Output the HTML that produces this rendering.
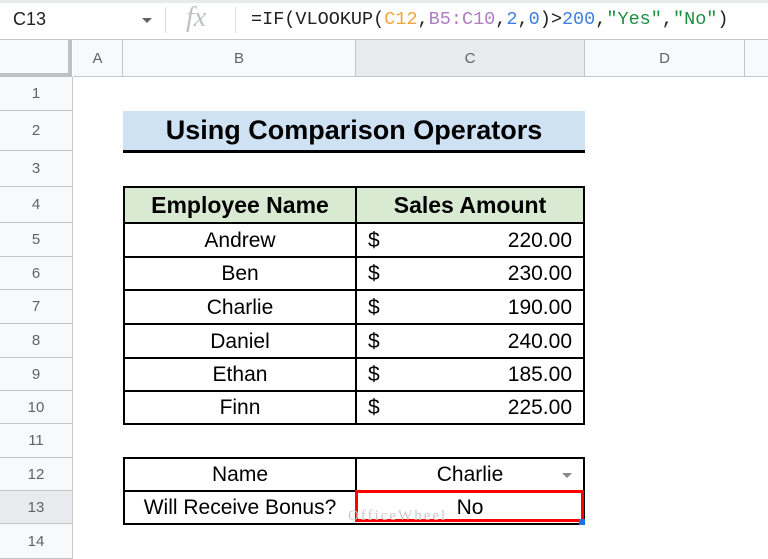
<!DOCTYPE html>
<html><head><style>
*{margin:0;padding:0;box-sizing:border-box}
body{width:768px;height:559px;overflow:hidden;background:#fff;font-family:"Liberation Sans",Arial,sans-serif;position:relative}
.a{position:absolute}
.rh{position:absolute;left:0;width:72px;border-bottom:1px solid #c4c7c5;background:#f8f9fa;color:#5f6368;font-size:15px;text-align:center;display:flex;align-items:center;justify-content:center}
.ch{position:absolute;top:40px;height:37px;border-right:1px solid #c4c7c5;background:#f8f9fa;color:#5f6368;font-size:15px;display:flex;align-items:center;justify-content:center}
.c{position:absolute;display:flex;align-items:center;justify-content:center;font-size:21px;color:#000}
</style></head><body>
<div class="a" style="left:0;top:0;width:768px;height:3px;background:#e8eaed"></div>
<div class="a" style="left:0;top:39px;width:768px;height:1px;background:#c4c7c5"></div>
<div class="a" style="left:13px;top:9px;font-size:18px;color:#202124">C13</div>
<div class="a" style="left:142px;top:18px;width:0;height:0;border-left:5px solid transparent;border-right:5px solid transparent;border-top:5px solid #5f6368"></div>
<div class="a" style="left:165px;top:7px;width:1px;height:26px;background:#dadce0"></div>
<div class="a" style="left:186px;top:2px;font-family:'Liberation Serif',serif;font-style:italic;font-size:28px;color:#bdc1c6">fx</div>
<div class="a" style="left:235px;top:7px;width:1px;height:26px;background:#dadce0"></div>
<div class="a" style="left:251px;top:9px;font-family:'Liberation Mono',monospace;font-size:18.5px;color:#202124;white-space:pre">=IF(VLOOKUP(<span style="color:#f4a53c">C12</span>,<span style="color:#b07cc6">B5:C10</span>,<span style="color:#3d7fe0">2</span>,<span style="color:#3d7fe0">0</span>)&gt;<span style="color:#3d7fe0">200</span>,<span style="color:#1e8e3e">"Yes"</span>,<span style="color:#1e8e3e">"No"</span>)</div>
<div class="a" style="left:0;top:40px;width:72px;height:37px;background:#f8f9fa;border-right:4px solid #bdc1c6;border-bottom:4px solid #bdc1c6"></div>
<div class="ch" style="left:73px;width:50px">A</div>
<div class="ch" style="left:123px;width:233px">B</div>
<div class="ch" style="left:356px;width:229px;background:#e8eaed">C</div>
<div class="ch" style="left:585px;width:160px">D</div>
<div class="ch" style="left:745px;width:23px;border-right:none"></div>
<div class="a" style="left:73px;top:76px;width:695px;height:1px;background:#c4c7c5"></div>
<div class="a" style="left:72px;top:77px;width:1px;height:482px;background:#c4c7c5"></div>
<div class="rh" style="top:77px;height:34px">1</div>
<div class="rh" style="top:111px;height:40px">2</div>
<div class="rh" style="top:151px;height:36px">3</div>
<div class="rh" style="top:187px;height:36px">4</div>
<div class="rh" style="top:223px;height:34px">5</div>
<div class="rh" style="top:257px;height:33px">6</div>
<div class="rh" style="top:290px;height:34px">7</div>
<div class="rh" style="top:324px;height:34px">8</div>
<div class="rh" style="top:358px;height:33px">9</div>
<div class="rh" style="top:391px;height:33px">10</div>
<div class="rh" style="top:424px;height:34px">11</div>
<div class="rh" style="top:458px;height:33px">12</div>
<div class="rh" style="top:491px;height:33px;background:#e8eaed">13</div>
<div class="rh" style="top:524px;height:35px">14</div>
<div class="c" style="left:123px;top:111px;width:462px;height:42px;background:#cfe2f3;border-bottom:3px solid #000;font-weight:bold;font-size:27px">Using Comparison Operators</div>
<div class="a" style="left:123px;top:186px;width:462px;height:239px;border:2px solid #000"></div>
<div class="a" style="left:125px;top:188px;width:458px;height:35px;background:#d9ead3"></div>
<div class="a" style="left:355px;top:186px;width:2px;height:239px;background:#000"></div>
<div class="a" style="left:123px;top:222px;width:462px;height:2px;background:#000"></div>
<div class="a" style="left:123px;top:256px;width:462px;height:2px;background:#000"></div>
<div class="a" style="left:123px;top:289px;width:462px;height:2px;background:#000"></div>
<div class="a" style="left:123px;top:323px;width:462px;height:2px;background:#000"></div>
<div class="a" style="left:123px;top:357px;width:462px;height:2px;background:#000"></div>
<div class="a" style="left:123px;top:390px;width:462px;height:2px;background:#000"></div>
<div class="c" style="left:125px;top:188px;width:230px;height:35px;font-weight:bold;font-size:23px">Employee Name</div>
<div class="c" style="left:357px;top:188px;width:226px;height:35px;font-weight:bold;font-size:23px">Sales Amount</div>
<div class="c" style="left:125px;top:224px;width:230px;height:33px">Andrew</div>
<div class="c" style="left:125px;top:258px;width:230px;height:32px">Ben</div>
<div class="c" style="left:125px;top:291px;width:230px;height:33px">Charlie</div>
<div class="c" style="left:125px;top:325px;width:230px;height:33px">Daniel</div>
<div class="c" style="left:125px;top:359px;width:230px;height:32px">Ethan</div>
<div class="c" style="left:125px;top:392px;width:230px;height:32px">Finn</div>
<div class="c" style="left:368px;top:224px;height:33px">$</div><div class="c" style="left:470px;top:224px;width:102px;height:33px;justify-content:flex-end">220.00</div>
<div class="c" style="left:368px;top:258px;height:32px">$</div><div class="c" style="left:470px;top:258px;width:102px;height:32px;justify-content:flex-end">230.00</div>
<div class="c" style="left:368px;top:291px;height:33px">$</div><div class="c" style="left:470px;top:291px;width:102px;height:33px;justify-content:flex-end">190.00</div>
<div class="c" style="left:368px;top:325px;height:33px">$</div><div class="c" style="left:470px;top:325px;width:102px;height:33px;justify-content:flex-end">240.00</div>
<div class="c" style="left:368px;top:359px;height:32px">$</div><div class="c" style="left:470px;top:359px;width:102px;height:32px;justify-content:flex-end">185.00</div>
<div class="c" style="left:368px;top:392px;height:32px">$</div><div class="c" style="left:470px;top:392px;width:102px;height:32px;justify-content:flex-end">225.00</div>
<div class="a" style="left:123px;top:457px;width:462px;height:68px;border:2px solid #000"></div>
<div class="a" style="left:355px;top:457px;width:2px;height:36px;background:#000"></div>
<div class="a" style="left:123px;top:490px;width:462px;height:2px;background:#000"></div>
<div class="c" style="left:125px;top:459px;width:230px;height:32px">Name</div>
<div class="c" style="left:357px;top:459px;width:226px;height:32px">Charlie</div>
<div class="a" style="left:562px;top:473px;width:0;height:0;border-left:5px solid transparent;border-right:5px solid transparent;border-top:5px solid #888"></div>
<div class="c" style="left:125px;top:492px;width:230px;height:32px">Will Receive Bonus?</div>
<div class="a" style="left:355px;top:490px;width:229px;height:32px;border:3px solid #f00"></div>
<div class="c" style="left:357px;top:492px;width:226px;height:32px">No</div>
<div class="a" style="left:579px;top:519px;width:6px;height:6px;background:#1a73e8"></div>
<div class="a" style="left:348px;top:508px;font-family:'Liberation Serif',serif;font-size:15px;letter-spacing:2px;color:#c8c8c8">OfficeWheel</div>
</body></html>
